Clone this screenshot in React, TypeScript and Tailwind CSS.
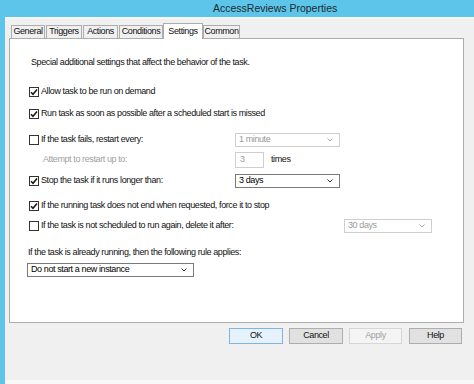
import React from "react";

const font = { fontFamily: '"Liberation Sans", Arial, sans-serif' };

function Check({ checked }: { checked?: boolean }) {
  return (
    <span className="w-[10px] h-[10px] border border-[#333333] bg-white flex items-center justify-center shrink-0">
      {checked && (
        <svg width="8" height="8" viewBox="0 0 8 8">
          <path d="M1 4.2 L3 6.3 L7 1.5" fill="none" stroke="#1a1a1a" strokeWidth="1.6" />
        </svg>
      )}
    </span>
  );
}

function Select({ label, disabled, w }: { label: string; disabled?: boolean; w: string }) {
  return (
    <div
      className={`${w} h-[14px] bg-white border flex items-center justify-between pl-[3px] pr-[6px] ${
        disabled ? "border-[#cfcfcf] text-[#9a9a9a]" : "border-[#7a7a7a] text-black"
      }`}
    >
      <span>{label}</span>
      <svg width="6" height="4" viewBox="0 0 6 4">
        <path d="M0.5 0.5 L3 3 L5.5 0.5" fill="none" stroke={disabled ? "#a8a8a8" : "#333"} strokeWidth="1" />
      </svg>
    </div>
  );
}

function Row({
  checked,
  label,
  mt,
  left = "w-[206px]",
  children,
}: {
  checked?: boolean;
  label: string;
  mt: string;
  left?: string;
  children?: React.ReactNode;
}) {
  return (
    <div className={`flex items-center h-[16px] pl-[19px] ${mt}`}>
      <div className={`flex items-center gap-[2px] ${left} shrink-0 whitespace-nowrap`}>
        <Check checked={checked} />
        <span>{label}</span>
      </div>
      {children}
    </div>
  );
}

const tabs = [
  { name: "General", w: "w-[34px]", ml: "ml-[6px]" },
  { name: "Triggers", w: "w-[36px]", ml: "ml-[1px]" },
  { name: "Actions", w: "w-[35px]", ml: "ml-[1px]" },
  { name: "Conditions", w: "w-[44px]", ml: "ml-[1px]" },
  { name: "Settings", w: "w-[40px]", ml: "ml-0", active: true },
  { name: "Common", w: "w-[37px]", ml: "ml-0" },
];

export default function App() {
  return (
    <div
      className="w-[474px] h-[384px] bg-[#5cc5e9] flex flex-col overflow-hidden text-[9px] tracking-[-0.4px] text-[#111]"
      style={font}
    >
      {/* Title bar */}
      <div className="h-[17px] shrink-0 flex items-center pl-[213px] text-[10.5px] tracking-normal text-[#1e2a30]">
        AccessReviews Properties
      </div>

      <div className="flex-1 flex">
        <div className="w-[5px] shrink-0" />
        <div className="flex-1 bg-[#f0f0f0] flex flex-col border-t-2 border-[#f7f7f7]">
          {/* Tabs */}
          <div className="h-[19px] flex items-end shrink-0">
            {tabs.map((t) =>
              t.active ? (
                <div
                  key={t.name}
                  className={`${t.w} ${t.ml} h-[16px] -mb-[1px] relative z-10 bg-white border border-b-0 border-[#adadad] flex items-start justify-center pt-[1px]`}
                >
                  {t.name}
                </div>
              ) : (
                <div
                  key={t.name}
                  className={`${t.w} ${t.ml} h-[13px] bg-[#f0f0f0] border border-b-0 border-[#adadad] flex items-center justify-center`}
                >
                  {t.name}
                </div>
              )
            )}
          </div>

          {/* Panel */}
          <div className="ml-[4px] w-[455px] h-[285px] bg-white border border-[#adadad] flex flex-col shrink-0">
            <div className="h-[16px] mt-[16px] pl-[21px] flex items-center">
              Special additional settings that affect the behavior of the task.
            </div>

            <Row checked label="Allow task to be run on demand" mt="mt-[13px]" />
            <Row checked label="Run task as soon as possible after a scheduled start is missed" mt="mt-[6px]" />
            <Row label="If the task fails, restart every:" mt="mt-[10px]">
              <Select label="1 minute" disabled w="w-[105px]" />
            </Row>
            <div className="flex items-center h-[16px] mt-[4px] pl-[33px]">
              <span className="w-[192px] text-[#a0a0a0]">Attempt to restart up to:</span>
              <div className="w-[29px] h-[16px] border border-[#cfcfcf] bg-white text-[#9a9a9a] pl-[4px] flex items-center">
                3
              </div>
              <span className="ml-[7px]">times</span>
            </div>
            <Row checked label="Stop the task if it runs longer than:" mt="mt-[5px]">
              <Select label="3 days" w="w-[105px]" />
            </Row>
            <Row checked label="If the running task does not end when requested, force it to stop" mt="mt-[9px]" />
            <Row label="If the task is not scheduled to run again, delete it after:" mt="mt-[4px]" left="w-[315px]">
              <Select label="30 days" disabled w="w-[88px]" />
            </Row>

            <div className="h-[16px] mt-[11px] pl-[18px] flex items-center">
              If the task is already running, then the following rule applies:
            </div>
            <div className="mt-[2px] pl-[17px]">
              <Select label="Do not start a new instance" w="w-[167px]" />
            </div>
          </div>

          {/* Buttons */}
          <div className="flex gap-[6px] mt-[5px] pl-[224px] shrink-0">
            <button className="w-[54px] h-[16px] bg-[#e5f1fb] border border-[#7eb4ea] text-[#111] flex items-center justify-center">
              OK
            </button>
            <button className="w-[54px] h-[16px] bg-[#e1e1e1] border border-[#adadad] flex items-center justify-center">
              Cancel
            </button>
            <button className="w-[53px] h-[16px] bg-[#f4f4f4] border border-[#d6d6d6] text-[#a0a0a0] flex items-center justify-center">
              Apply
            </button>
            <button className="w-[53px] h-[16px] ml-[1px] bg-[#e1e1e1] border border-[#adadad] flex items-center justify-center">
              Help
            </button>
          </div>

          <div className="flex-1" />
          <div className="h-[4px] bg-[#f8f8f8] shrink-0" />
        </div>
      </div>
    </div>
  );
}
